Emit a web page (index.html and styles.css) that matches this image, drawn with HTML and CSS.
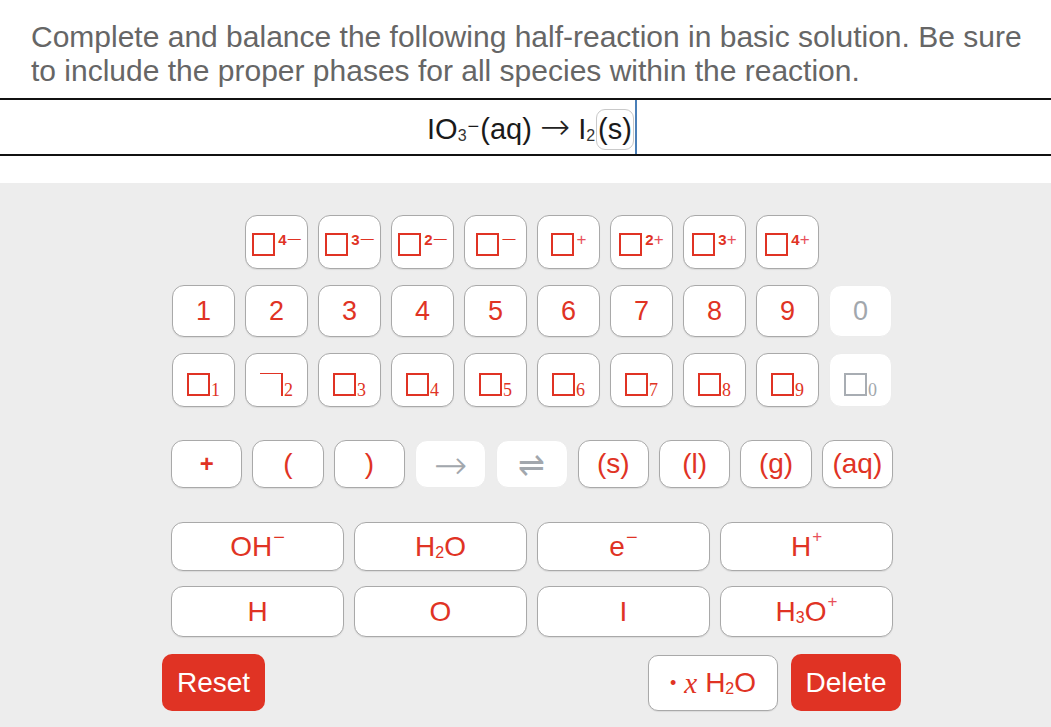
FILE: index.html
```html
<!DOCTYPE html>
<html>
<head>
<meta charset="utf-8">
<link rel="stylesheet" href="styles.css">
</head>
<body>
<p class="prompt">Complete and balance the following half-reaction in basic solution. Be sure to include the proper phases for all species within the reaction.</p>
<div class="answer">
  <div class="eq">IO<span class="esub">3</span><span class="esup">−</span>(aq) <span class="earrow">→</span> I<span class="esub">2</span><span class="sel">(s)</span></div>
  <div class="cursor"></div>
</div>
<div class="panel">
  <div class="keypad">
    <div class="row row-charge">
      <button class="key"><span class="ch"><span class="box"></span><span class="sup"><b>4</b><i class="dash">—</i></span></span></button>
      <button class="key"><span class="ch"><span class="box"></span><span class="sup"><b>3</b><i class="dash">—</i></span></span></button>
      <button class="key"><span class="ch"><span class="box"></span><span class="sup"><b>2</b><i class="dash">—</i></span></span></button>
      <button class="key"><span class="ch"><span class="box"></span><span class="sup"><i class="dash">—</i></span></span></button>
      <button class="key"><span class="ch"><span class="box"></span><span class="sup"><i class="plus">+</i></span></span></button>
      <button class="key"><span class="ch"><span class="box"></span><span class="sup"><b>2</b><i class="plus">+</i></span></span></button>
      <button class="key"><span class="ch"><span class="box"></span><span class="sup"><b>3</b><i class="plus">+</i></span></span></button>
      <button class="key"><span class="ch"><span class="box"></span><span class="sup"><b>4</b><i class="plus">+</i></span></span></button>
    </div>
    <div class="row row-digits">
      <button class="key">1</button>
      <button class="key">2</button>
      <button class="key">3</button>
      <button class="key">4</button>
      <button class="key">5</button>
      <button class="key">6</button>
      <button class="key">7</button>
      <button class="key">8</button>
      <button class="key">9</button>
      <button class="key off">0</button>
    </div>
    <div class="row row-digits row-subs">
      <button class="key"><span class="sb"><span class="box"></span><span class="sd">1</span></span></button>
      <button class="key"><span class="sb"><span class="box half"></span><span class="sd">2</span></span></button>
      <button class="key"><span class="sb"><span class="box"></span><span class="sd">3</span></span></button>
      <button class="key"><span class="sb"><span class="box"></span><span class="sd">4</span></span></button>
      <button class="key"><span class="sb"><span class="box"></span><span class="sd">5</span></span></button>
      <button class="key"><span class="sb"><span class="box"></span><span class="sd">6</span></span></button>
      <button class="key"><span class="sb"><span class="box"></span><span class="sd">7</span></span></button>
      <button class="key"><span class="sb"><span class="box"></span><span class="sd">8</span></span></button>
      <button class="key"><span class="sb"><span class="box"></span><span class="sd">9</span></span></button>
      <button class="key off"><span class="sb"><span class="box"></span><span class="sd">0</span></span></button>
    </div>
    <div class="row row-sym">
      <button class="key big">+</button>
      <button class="key">(</button>
      <button class="key">)</button>
      <button class="key off arrow">→</button>
      <button class="key off arrow eqm">⇌</button>
      <button class="key">(s)</button>
      <button class="key">(l)</button>
      <button class="key">(g)</button>
      <button class="key">(aq)</button>
    </div>
    <div class="row row-species">
      <button class="key">OH<span class="k-sup">−</span></button>
      <button class="key">H<span class="k-sub">2</span>O</button>
      <button class="key">e<span class="k-sup">−</span></button>
      <button class="key">H<span class="k-sup plus">+</span></button>
    </div>
    <div class="row row-species row-species2">
      <button class="key">H</button>
      <button class="key">O</button>
      <button class="key">I</button>
      <button class="key">H<span class="k-sub">3</span>O<span class="k-sup plus">+</span></button>
    </div>
  </div>
  <div class="actions">
    <button class="btn-red">Reset</button>
    <div class="right">
      <button class="key hyd"><span class="dot">•</span><span class="xv">x</span>H<span class="k-sub">2</span>O</button>
      <button class="btn-red">Delete</button>
    </div>
  </div>
</div>
</body>
</html>
```

FILE: styles.css
```css
* { box-sizing: border-box; }
html, body { margin: 0; padding: 0; }
body {
  width: 1051px;
  height: 727px;
  overflow: hidden;
  background: #fff;
  font-family: "Liberation Sans", Arial, sans-serif;
}
.prompt {
  margin: 0;
  padding: 20px 14px 0 31px;
  font-size: 30px;
  line-height: 34px;
  color: #666;
}
.answer {
  margin-top: 10px;
  border-top: 2px solid #111;
  border-bottom: 2px solid #111;
  height: 58px;
  display: flex;
  justify-content: center;
  align-items: stretch;
  padding-left: 13px;
}
.eq {
  align-self: center;
  font-size: 29px;
  color: #1a1a1a;
  display: flex;
  align-items: baseline;
  padding-top: 4px;
  white-space: pre;
}
.earrow { font-family: "DejaVu Sans", sans-serif; font-size: 36px; font-weight: 200; color: #222; line-height: 1; }
.esub { font-size: 16px; position: relative; top: 2px; color: #333; }
.esup { font-size: 20px; position: relative; top: -6px; margin-right: 1px; margin-left: 1px; }
.sel {
  border: 1px solid #c9c9c9;
  border-radius: 9px;
  padding: 2px 1px 3px 1px;
  margin-left: 1px;
  line-height: 34px;
}
.cursor {
  width: 2px;
  background: #4a7fb8;
  margin-left: 1px;
}
.panel {
  margin-top: 27px;
  background: #ededed;
  height: 544px;
  padding-top: 32px;
}
.keypad {
  margin-left: 171px;
  width: 722px;
}
.row { display: grid; gap: 10px; }
.key {
  font-family: "Liberation Sans", Arial, sans-serif;
  background: #fff;
  border: 1px solid #a9a9a9;
  border-radius: 12px;
  color: #e03324;
  font-size: 27px;
  padding: 0;
  display: flex;
  align-items: center;
  justify-content: center;
  box-shadow: 0 1px 1px rgba(0,0,0,0.08);
}
.key.off {
  border-color: #ececec;
  color: #a2a7ad;
  box-shadow: none;
}
.row-charge {
  margin-left: 74px;
  grid-template-columns: repeat(8, 63px);
  height: 54px;
}
.row-digits {
  margin-top: 16px;
  margin-left: 1px;
  grid-template-columns: repeat(10, 63px);
  height: 52px;
}
.row-subs { height: 54px; }
.row-sym {
  margin-top: 33px;
  grid-template-columns: repeat(9, 1fr);
  height: 48px;
}
.row-sym .key { font-size: 28px; }
.row-sym .big { font-weight: bold; font-size: 24px; }
.row-sym .key.arrow { font-family: "DejaVu Sans", sans-serif; font-size: 40px; font-weight: 200; padding-top: 2px; line-height: 1; }
.row-sym .key.eqm { font-size: 32px; }
.row-species {
  margin-top: 34px;
  grid-template-columns: repeat(4, 1fr);
  height: 49px;
}
.row-species2 { margin-top: 15px; height: 51px; }
.row-species .key { font-size: 28px; }
.k-sup { font-size: 20px; position: relative; top: -9px; margin-left: 1px; }
.k-sup.plus { font-size: 17px; top: -10px; color: #e8505a; }
.k-sub { font-size: 16px; position: relative; top: 6px; }

.ch { display: flex; align-items: flex-start; padding-top: 5px; }
.box {
  display: inline-block;
  width: 23px;
  height: 23px;
  border: 2px solid #e03324;
}
.off .box { border-color: #a8adb3; }
.box.half {
  border-left: none;
  border-bottom: none;
  border-top: 1px solid #e03324;
}
.sup {
  font-size: 15px;
  line-height: 1;
  margin-top: -1px;
  margin-left: 3px;
  display: flex;
  align-items: flex-start;
}
.sup b { font-weight: bold; font-size: 15px; }
.sup .dash { font-style: normal; font-size: 13px; margin-left: 1px; }
.sup .plus { font-style: normal; font-weight: normal; color: #e8505a; font-size: 17px; margin-top: -1px; }
.sb { display: flex; align-items: flex-end; padding-top: 8px; }
.sd {
  font-family: "Liberation Serif", "Times New Roman", serif;
  font-size: 18px;
  line-height: 1;
  margin-left: 1px;
  margin-bottom: -3px;
}
.actions {
  margin-top: 17px;
  margin-left: 162px;
  width: 739px;
  display: flex;
  justify-content: space-between;
  height: 57px;
}
.right { display: flex; gap: 13px; }
.btn-red {
  font-family: "Liberation Sans", Arial, sans-serif;
  background: #e03324;
  color: #fff;
  border: none;
  border-radius: 10px;
  font-size: 28px;
  padding: 0;
  width: 103px;
  height: 57px;
}
.right .btn-red { width: 110px; }
.key.hyd {
  width: 130px;
  height: 56px;
  margin-top: 1px;
  border-radius: 10px;
  font-size: 28px;
}
.dot { font-size: 18px; margin-right: 8px; }
.xv { font-family: "Liberation Serif", serif; font-style: italic; margin-right: 8px; font-size: 29px; }
```
